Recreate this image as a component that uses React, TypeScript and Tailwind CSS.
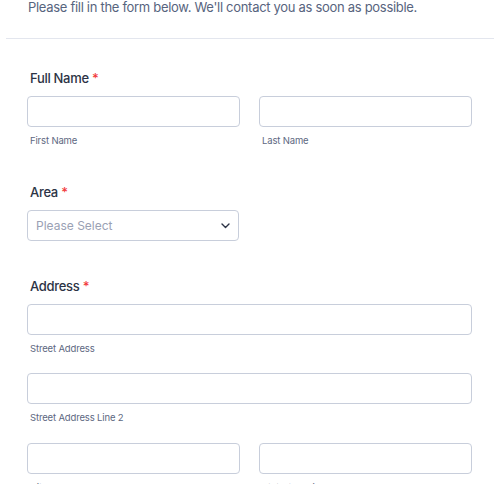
import React from "react";

function Label({ text }: { text: string }) {
  return (
    <div className="pl-[3px] text-[13px] leading-[20px] tracking-[-0.3px] font-medium text-[#2c3345]">
      {text} <span className="text-[#f23a3c]">*</span>
    </div>
  );
}

function Input({ className = "" }: { className?: string }) {
  return (
    <div
      className={
        "h-[31px] rounded-[4px] border border-[#c8cedb] bg-white " + className
      }
    />
  );
}

function Sub({ text }: { text: string }) {
  return (
    <div className="mt-[6px] pl-[3px] text-[9.5px] leading-[16px] tracking-[-0.15px] text-[#5d6881]">{text}</div>
  );
}

export default function App() {
  return (
    <div
      className="w-[500px] h-[484px] overflow-hidden bg-white"
      style={{ fontFamily: "Inter, 'Noto Sans', sans-serif" }}
    >
      <div className="pl-[28px] mt-[-3px] text-[13px] leading-[20px] tracking-[-0.3px] text-[#57647e]">
        Please fill in the form below. We'll contact you as soon as possible.
      </div>
      <div className="mx-[6px] mt-[21px] border-t border-[#e3e6ee]" />
      <div className="pl-[27px] pr-[28px]">
        <div className="mt-[29px]">
          <Label text="Full Name" />
          <div className="mt-[8px] grid grid-cols-2 gap-x-[19px]">
            <div>
              <Input />
              <Sub text="First Name" />
            </div>
            <div>
              <Input />
              <Sub text="Last Name" />
            </div>
          </div>
        </div>
        <div className="mt-[33px]">
          <Label text="Area" />
          <div className="mt-[8px] w-[212px] h-[31px] rounded-[4px] border border-[#c8cedb] bg-white flex items-center justify-between pl-[8px] pr-[8px]">
            <span className="text-[12px] text-[#9aa1b4]">Please Select</span>
            <svg width="9" height="6" viewBox="0 0 9 6" fill="none">
              <path
                d="M1 1 L4.5 4.5 L8 1"
                stroke="#2c3345"
                strokeWidth="1.4"
                strokeLinecap="round"
                strokeLinejoin="round"
              />
            </svg>
          </div>
        </div>
        <div className="mt-[35px]">
          <Label text="Address" />
          <div className="mt-[8px]">
            <Input />
            <Sub text="Street Address" />
          </div>
          <div className="mt-[16px]">
            <Input />
            <Sub text="Street Address Line 2" />
          </div>
          <div className="mt-[17px] grid grid-cols-2 gap-x-[19px]">
            <div>
              <Input />
              <Sub text="City" />
            </div>
            <div>
              <Input />
              <Sub text="State / Province" />
            </div>
          </div>
        </div>
      </div>
    </div>
  );
}
